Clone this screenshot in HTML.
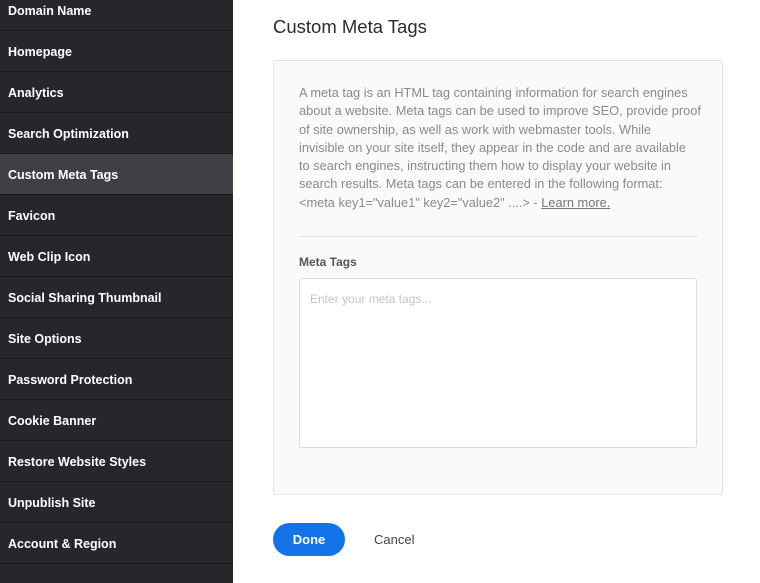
<!DOCTYPE html>
<html><head><style>
*{margin:0;padding:0;box-sizing:border-box}
body{width:760px;height:583px;overflow:hidden;background:#fff;font-family:"Liberation Sans",sans-serif;position:relative}
.sb{position:absolute;left:0;top:0;width:233px;height:583px;background:#26272b}
.it{position:absolute;left:0;width:233px;height:41px;border-bottom:1px solid #1a1b1e;color:#fff;font-size:12.5px;font-weight:bold;padding-left:8px;line-height:42px}
.it.a{background:#3f4045}
h1{position:absolute;left:273px;top:16px;font-size:18.5px;font-weight:normal;color:#2c2c2c}
.card{position:absolute;left:273px;top:60px;width:450px;height:435px;background:#fafafa;border:1px solid #e4e4e4;border-radius:3px}
.desc{position:absolute;left:25px;top:23px;font-size:12.8px;line-height:18.3px;color:#8a8a8a;white-space:nowrap}
.desc u{color:#777}
.hr{position:absolute;left:25px;top:175px;width:398px;border-top:1px solid #e2e2e2}
.lbl{position:absolute;left:25px;top:194px;font-size:12px;font-weight:bold;color:#555}
.ta{position:absolute;left:25px;top:217px;width:398px;height:170px;background:#fff;border:1px solid #dcdcdc;border-radius:3px;font-size:12px;color:#c4c4c4;padding:13px 10px}
.done{position:absolute;left:273px;top:523px;width:72px;height:33px;border-radius:17px;background:#1473e6;color:#fff;font-size:13px;font-weight:bold;text-align:center;line-height:33px}
.cancel{position:absolute;left:374px;top:532px;font-size:13px;color:#444}
</style></head><body>
<div class="sb">
<div class="it" style="top:-10px">Domain Name</div>
<div class="it" style="top:31px">Homepage</div>
<div class="it" style="top:72px">Analytics</div>
<div class="it" style="top:113px">Search Optimization</div>
<div class="it a" style="top:154px">Custom Meta Tags</div>
<div class="it" style="top:195px">Favicon</div>
<div class="it" style="top:236px">Web Clip Icon</div>
<div class="it" style="top:277px">Social Sharing Thumbnail</div>
<div class="it" style="top:318px">Site Options</div>
<div class="it" style="top:359px">Password Protection</div>
<div class="it" style="top:400px">Cookie Banner</div>
<div class="it" style="top:441px">Restore Website Styles</div>
<div class="it" style="top:482px">Unpublish Site</div>
<div class="it" style="top:523px">Account &amp; Region</div>
</div>
<h1>Custom Meta Tags</h1>
<div class="card">
<div class="desc">A meta tag is an HTML tag containing information for search engines<br>about a website. Meta tags can be used to improve SEO, provide proof<br>of site ownership, as well as work with webmaster tools. While<br>invisible on your site itself, they appear in the code and are available<br>to search engines, instructing them how to display your website in<br>search results. Meta tags can be entered in the following format:<br>&lt;meta key1="value1" key2="value2" ....&gt; - <u>Learn more.</u></div>
<div class="hr"></div>
<div class="lbl">Meta Tags</div>
<div class="ta">Enter your meta tags...</div>
</div>
<div class="done">Done</div>
<div class="cancel">Cancel</div>
</body></html>
